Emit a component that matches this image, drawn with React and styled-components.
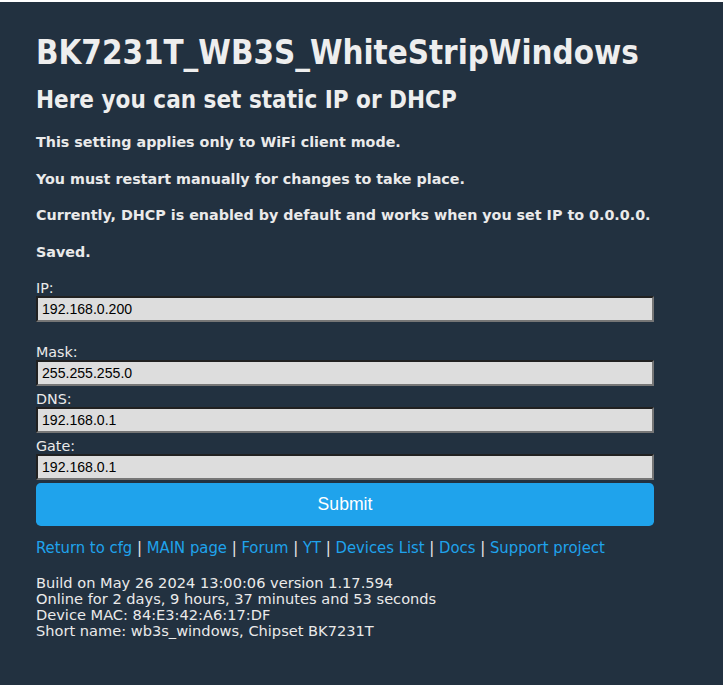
import React from "react";
import styled, { createGlobalStyle } from "styled-components";

const Global = createGlobalStyle`
  html { background: #ffffff; }
  body {
    margin: 0;
    border-top: 2px solid #ffffff;
    background: #223140;
    min-height: 683px;
    color: #eaeaea;
    font-family: "DejaVu Sans", Verdana, sans-serif;
    font-size: 14.3px;
  }
`;

const Page = styled.div`
  width: 618px;
  padding: 0 0 40px 36px;
`;

const Title = styled.h1`
  font-family: "DejaVu Sans Condensed", "DejaVu Sans", sans-serif;
  font-weight: bold;
  font-size: 32.8px;
  margin: 0;
  padding-top: 33px;
  line-height: 36px;
  color: #eeeeee;
`;

const Subtitle = styled.h2`
  font-family: "DejaVu Sans Condensed", "DejaVu Sans", sans-serif;
  font-weight: bold;
  font-size: 24px;
  line-height: 28px;
  margin: 15px 0 0;
  color: #eeeeee;
`;

const Note = styled.h5`
  font-size: 14.3px;
  font-weight: bold;
  line-height: 16px;
  margin: ${(p) => (p.$first ? 20 : 20.5)}px 0 0;
`;

const Form = styled.form`
  margin-top: 20px;
  display: flex;
  flex-direction: column;
`;

const Label = styled.label`
  line-height: 16px;
  height: 16px;
  display: block;
  font-size: 14.3px;
`;

const Input = styled.input`
  width: 100%;
  box-sizing: border-box;
  padding: 0 4px;
  background: #dddddd;
  color: #000;
  font-family: "Liberation Sans", Arial, sans-serif;
  font-size: 14.1px;
  border: 2px inset #767676;
  height: 26px;
  margin: 0 0 ${(p) => p.$gap || 0}px;
`;

const Button = styled.button`
  border: 0;
  border-radius: 0.3rem;
  background: #1fa3ec;
  color: #fff;
  height: 43px;
  font-size: 17.6px;
  font-family: "Liberation Sans", Arial, sans-serif;
  width: 100%;
  margin-top: 3px;
  cursor: pointer;
`;

const Links = styled.div`
  margin-top: 13px;
  font-family: "DejaVu Sans Condensed", "DejaVu Sans", sans-serif;
  font-size: 16.5px;
  line-height: 18px;
`;

const Link = styled.a`
  color: #1fa3ec;
  text-decoration: none;
`;

const Info = styled.div`
  margin-top: 18px;
  line-height: 16px;
  font-size: 14.6px;
`;

const fields = [
  { label: "IP:", value: "192.168.0.200", gap: 22 },
  { label: "Mask:", value: "255.255.255.0", gap: 5 },
  { label: "DNS:", value: "192.168.0.1", gap: 5 },
  { label: "Gate:", value: "192.168.0.1", gap: 0 },
];

const links = ["Return to cfg", "MAIN page", "Forum", "YT", "Devices List", "Docs", "Support project"];

export default function App() {
  return (
    <>
      <Global />
      <Page>
        <Title>BK7231T_WB3S_WhiteStripWindows</Title>
        <Subtitle>Here you can set static IP or DHCP</Subtitle>
        <Note $first>This setting applies only to WiFi client mode.</Note>
        <Note>You must restart manually for changes to take place.</Note>
        <Note>Currently, DHCP is enabled by default and works when you set IP to 0.0.0.0.</Note>
        <Note>Saved.</Note>
        <Form onSubmit={(e) => e.preventDefault()}>
          {fields.map((f) => (
            <React.Fragment key={f.label}>
              <Label>{f.label}</Label>
              <Input defaultValue={f.value} $gap={f.gap} />
            </React.Fragment>
          ))}
          <Button type="submit">Submit</Button>
        </Form>
        <Links>
          {links.map((l, i) => (
            <React.Fragment key={l}>
              {i > 0 && " | "}
              <Link href="#">{l}</Link>
            </React.Fragment>
          ))}
        </Links>
        <Info>
          Build on May 26 2024 13:00:06 version 1.17.594
          <br />
          Online for 2 days, 9 hours, 37 minutes and 53 seconds
          <br />
          Device MAC: 84:E3:42:A6:17:DF
          <br />
          Short name: wb3s_windows, Chipset BK7231T
        </Info>
      </Page>
    </>
  );
}
